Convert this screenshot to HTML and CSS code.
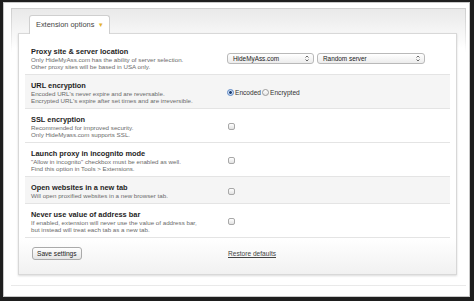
FILE: index.html
```html
<!DOCTYPE html>
<html lang="en">
<head>
    <meta charset="UTF-8">
    <meta name="viewport" content="width=device-width, initial-scale=1.0">
    <title>Extension options</title>
    <link rel="stylesheet" href="styles.css">
</head>
<body>
    <div class="frame">
        <div class="shell">
            <div class="tab">Extension options <span class="tab-arrow">&#9662;</span></div>
            <div class="panel">
                <div class="row">
                    <div class="label">
                        <p class="title">Proxy site &amp; server location</p>
                        <p class="desc">Only HideMyAss.com has the ability of server selection.<br>Other proxy sites will be based in USA only.</p>
                    </div>
                    <div class="control">
                        <div class="select select-site">HideMyAss.com
                            <svg class="updown" viewBox="0 0 4 7" width="4" height="7"><path d="M0.5 2.5 L2 1 L3.5 2.5 M0.5 4.5 L2 6 L3.5 4.5" fill="none" stroke="#444" stroke-width="0.8"/></svg>
                        </div>
                        <div class="select select-server">Random server
                            <svg class="updown" viewBox="0 0 4 7" width="4" height="7"><path d="M0.5 2.5 L2 1 L3.5 2.5 M0.5 4.5 L2 6 L3.5 4.5" fill="none" stroke="#444" stroke-width="0.8"/></svg>
                        </div>
                    </div>
                </div>
                <div class="row shaded">
                    <div class="label">
                        <p class="title">URL encryption</p>
                        <p class="desc">Encoded URL's never expire and are reversable.<br>Encrypted URL's expire after set times and are irreversible.</p>
                    </div>
                    <div class="control">
                        <span class="radio checked"></span><span class="opt">Encoded</span>
                        <span class="radio"></span><span class="opt">Encrypted</span>
                    </div>
                </div>
                <div class="row">
                    <div class="label">
                        <p class="title">SSL encryption</p>
                        <p class="desc">Recommended for improved security.<br>Only HideMyass.com supports SSL.</p>
                    </div>
                    <div class="control"><span class="check"></span></div>
                </div>
                <div class="row">
                    <div class="label">
                        <p class="title">Launch proxy in incognito mode</p>
                        <p class="desc">"Allow in incognito" checkbox must be enabled as well.<br>Find this option in Tools &gt; Extensions.</p>
                    </div>
                    <div class="control"><span class="check"></span></div>
                </div>
                <div class="row shaded">
                    <div class="label">
                        <p class="title">Open websites in a new tab</p>
                        <p class="desc">Will open proxified websites in a new browser tab.</p>
                    </div>
                    <div class="control"><span class="check"></span></div>
                </div>
                <div class="row">
                    <div class="label">
                        <p class="title">Never use value of address bar</p>
                        <p class="desc">If enabled, extension will never use the value of address bar,<br>but instead will treat each tab as a new tab.</p>
                    </div>
                    <div class="control"><span class="check"></span></div>
                </div>
                <div class="footer">
                    <div class="footer-cell"><button class="save">Save settings</button></div>
                    <div class="footer-cell"><a href="#" class="restore">Restore defaults</a></div>
                </div>
            </div>
        </div>
    </div>
</body>
</html>
```

FILE: styles.css
```css
body {
    margin: 0;
    background-color: white;
    font-family: "Liberation Sans", Arial, sans-serif;
    color: #222;
}
p {
    margin: 0;
}
.frame {
    width: 474px;
    height: 301px;
    box-sizing: border-box;
    border-style: solid;
    border-color: #1e1e1e;
    border-width: 2px 4px 4px 3px;
    box-shadow: inset 0 0 0 1px #c8c8c8;
    padding: 6px 4px 0 8px;
    background-color: white;
}
.shell {
    border: 1px solid;
    border-image: linear-gradient(to bottom, #cfcfcf, rgba(255, 255, 255, 0) 45px) 1;
    background: linear-gradient(to bottom, #e9e9e9, #ffffff 40px);
    padding: 4px 8px 10px 6px;
}
.tab {
    display: inline-block;
    position: relative;
    z-index: 1;
    margin-left: 11px;
    margin-bottom: -1px;
    height: 19px;
    box-sizing: border-box;
    padding: 0 6px;
    line-height: 18px;
    font-size: 7.4px;
    color: #444;
    background-color: white;
    border: 1px solid #cfcfcf;
    border-bottom: none;
    border-radius: 3px 3px 0 0;
}
.tab-arrow {
    color: #e4b22c;
    font-size: 7px;
    margin-left: 3px;
}
.panel {
    background-color: white;
    border: 1px solid #d8d8d8;
    box-shadow: 0 1px 2px rgba(0, 0, 0, 0.15);
    padding: 7px 6px 0 6px;
}
.row {
    display: grid;
    grid-template-columns: 196px 1fr;
    align-items: center;
    padding: 6px 0 4px 6px;
    border-bottom: 1px solid #e4e4e4;
}
.row.shaded {
    background-color: #f5f5f5;
}
.title {
    font-weight: bold;
    font-size: 7.4px;
    line-height: 9px;
    color: #1e1e1e;
}
.desc {
    font-size: 6.2px;
    line-height: 7px;
    color: #6a6a6a;
}
.control {
    display: flex;
    align-items: center;
}
.select {
    display: flex;
    align-items: center;
    justify-content: space-between;
    height: 11px;
    box-sizing: border-box;
    padding: 0 4px 0 5px;
    font-size: 6.4px;
    color: #222;
    border: 1px solid #b9b9b9;
    border-radius: 3px;
    background: linear-gradient(to bottom, #ffffff, #ececec);
}
.select-site {
    width: 87px;
    margin-right: 3px;
}
.select-server {
    width: 108px;
}
.radio {
    width: 7px;
    height: 7px;
    box-sizing: border-box;
    border: 1px solid #9a9a9a;
    border-radius: 50%;
    background: linear-gradient(to bottom, #ffffff, #e6e6e6);
}
.radio.checked {
    border-color: #5a86c4;
    background: radial-gradient(circle, #1f3f73 0, #1f3f73 1.2px, #cfe0f6 1.6px);
}
.opt {
    font-size: 6.6px;
    color: #333;
    margin: 0 1px 0 1px;
}
.check {
    width: 7px;
    height: 7px;
    box-sizing: border-box;
    margin-left: 1px;
    border: 1px solid #a8a8a8;
    border-radius: 2px;
    background: linear-gradient(to bottom, #ffffff, #e2e2e2);
}
.footer {
    display: grid;
    grid-template-columns: 196px 1fr;
    align-items: center;
    margin: 0 -6px;
    padding: 9px 0 14px 13px;
    background: linear-gradient(to bottom, #ffffff, #f1f1f1);
}
.footer-cell {
    display: flex;
    align-items: center;
}
.save {
    height: 13px;
    padding: 0 4px;
    font-family: "Liberation Sans", Arial, sans-serif;
    font-size: 6.6px;
    color: #222;
    border: 1px solid #aaaaaa;
    border-radius: 3px;
    background: linear-gradient(to bottom, #ffffff, #e4e4e4);
}
.restore {
    font-size: 6.6px;
    color: #444;
    text-decoration: underline;
}
```
